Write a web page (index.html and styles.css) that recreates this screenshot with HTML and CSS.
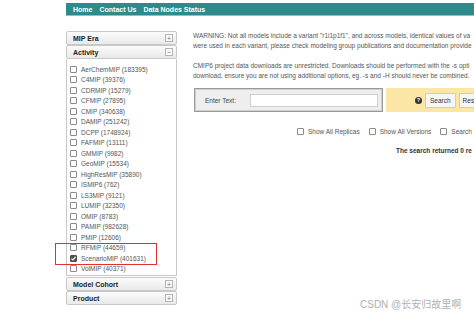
FILE: index.html
```html
<!DOCTYPE html>
<html lang="en">
<head>
<meta charset="utf-8">
<title>CMIP6 Search</title>
<link rel="stylesheet" href="styles.css">
</head>
<body>
<div class="page">
  <nav class="topnav">
    <a>Home</a>
    <a>Contact Us</a>
    <a>Data Nodes Status</a>
  </nav>
  <div class="layout">
    <aside class="sidebar">
      <div class="acc-head"><span>MIP Era</span><span class="acc-btn">+</span></div>
      <div class="acc-head"><span>Activity</span><span class="acc-btn">&minus;</span></div>
      <div class="acc-body">
        <div class="item"><span class="cb"></span>AerChemMIP (183395)</div>
        <div class="item"><span class="cb"></span>C4MIP (39376)</div>
        <div class="item"><span class="cb"></span>CDRMIP (15279)</div>
        <div class="item"><span class="cb"></span>CFMIP (27895)</div>
        <div class="item"><span class="cb"></span>CMIP (340638)</div>
        <div class="item"><span class="cb"></span>DAMIP (251242)</div>
        <div class="item"><span class="cb"></span>DCPP (1748924)</div>
        <div class="item"><span class="cb"></span>FAFMIP (13111)</div>
        <div class="item"><span class="cb"></span>GMMIP (9982)</div>
        <div class="item"><span class="cb"></span>GeoMIP (15534)</div>
        <div class="item"><span class="cb"></span>HighResMIP (35890)</div>
        <div class="item"><span class="cb"></span>ISMIP6 (762)</div>
        <div class="item"><span class="cb"></span>LS3MIP (9121)</div>
        <div class="item"><span class="cb"></span>LUMIP (32350)</div>
        <div class="item"><span class="cb"></span>OMIP (8783)</div>
        <div class="item"><span class="cb"></span>PAMIP (982628)</div>
        <div class="item"><span class="cb"></span>PMIP (12606)</div>
        <div class="item"><span class="cb"></span>RFMIP (44659)</div>
        <div class="item"><span class="cb checked"><svg viewBox="0 0 7 7" width="7" height="7"><path d="M1.4 3.6 L2.9 5 L5.6 1.8" fill="none" stroke="#fff" stroke-width="1.2"/></svg></span>ScenarioMIP (401631)</div>
        <div class="item"><span class="cb"></span>VolMIP (40371)</div>
      </div>
      <div class="acc-head gap"><span>Model Cohort</span><span class="acc-btn">+</span></div>
      <div class="acc-head"><span>Product</span><span class="acc-btn">+</span></div>
    </aside>
    <main class="content">
      <p class="notice">WARNING: Not all models include a variant "r1i1p1f1", and across models, identical values of va<br>were used in each variant, please check modeling group publications and documentation provide</p>
      <p class="notice second">CMIP6 project data downloads are unrestricted. Downloads should be performed with the -s opti<br>download, ensure you are not using additional options, eg. -s and -H should never be combined.</p>
      <div class="searchbar">
        <div class="search-text">
          <span class="label">Enter Text:</span>
          <span class="text-input"></span>
        </div>
        <div class="search-actions">
          <span class="help">?</span>
          <span class="btn">Search</span>
          <span class="btn btn-cut">Res</span>
        </div>
      </div>
      <div class="options">
        <span class="opt"><span class="cb"></span>Show All Replicas</span>
        <span class="opt"><span class="cb"></span>Show All Versions</span>
        <span class="opt"><span class="cb"></span>Search</span>
      </div>
      <div class="result">The search returned 0 re</div>
    </main>
  </div>
  <div class="highlight"></div>
  <div class="watermark">CSDN @长安归故里啊</div>
</div>
</body>
</html>
```

FILE: styles.css
```css
html, body {
  margin: 0;
  padding: 0;
  background: #fff;
}
body {
  width: 474px;
  height: 313px;
  overflow: hidden;
  font-family: "Liberation Sans", Arial, sans-serif;
}
.page {
  position: relative;
  width: 474px;
  height: 313px;
  padding: 3px 0 0 66px;
  box-sizing: border-box;
  overflow: hidden;
}
.topnav {
  height: 12px;
  background: #2f8a8c;
  border-bottom: 1px solid #8cc2c2;
  display: flex;
  align-items: center;
  gap: 7px;
  padding-left: 7px;
  font-size: 7px;
  font-weight: bold;
  color: #fff;
}
.topnav a { color: #fff; }
.layout {
  display: flex;
  margin-top: 15px;
  align-items: flex-start;
}
.sidebar {
  width: 111px;
  flex: none;
}
.acc-head {
  height: 14px;
  box-sizing: border-box;
  border: 1px solid #c8c8c8;
  border-radius: 2px;
  background: linear-gradient(#fbfbfb, #e9e9e9);
  display: flex;
  align-items: center;
  justify-content: space-between;
  padding: 0 3px 0 6px;
  font-size: 7px;
  font-weight: bold;
  color: #222;
}
.acc-head.gap { margin-top: 1px; }
.acc-btn {
  width: 8px;
  height: 8px;
  box-sizing: border-box;
  border: 1px solid #b5b5b5;
  background: #fafafa;
  display: flex;
  align-items: center;
  justify-content: center;
  font-size: 7px;
  font-weight: normal;
  line-height: 1;
  color: #777;
}
.acc-body {
  border: 1px solid #c8c8c8;
  border-top: none;
  padding: 5px 0 1px 3px;
  background: #fff;
}
.item {
  height: 10.5px;
  display: flex;
  align-items: center;
  gap: 4px;
  font-size: 6.5px;
  color: #555;
  white-space: nowrap;
}
.cb {
  width: 7px;
  height: 7px;
  box-sizing: border-box;
  border: 1px solid #8a8a8a;
  border-radius: 1px;
  background: #fff;
  flex: none;
  display: block;
  position: relative;
}
.cb.checked {
  background: #4f4f4f;
  border-color: #4f4f4f;
}
.cb.checked svg {
  position: absolute;
  left: -1px;
  top: -1px;
}
.content {
  margin-left: 16px;
  flex: 1;
  min-width: 0;
  white-space: nowrap;
}
.notice {
  margin: 0;
  font-size: 6.5px;
  line-height: 10px;
  color: #555;
}
.notice.second { margin-top: 10px; }
.searchbar {
  display: flex;
  gap: 3px;
  height: 24px;
  margin-top: 7px;
  margin-left: 1px;
}
.search-text {
  width: 189px;
  flex: none;
  box-sizing: border-box;
  border: 1px solid #9a9a9a;
  box-shadow: inset 0 0 0 1px #cfcfcf;
  background: #eeeeee;
  display: flex;
  align-items: center;
  padding-left: 10px;
}
.label {
  width: 45px;
  font-size: 6.5px;
  color: #444;
}
.text-input {
  width: 128px;
  height: 13px;
  box-sizing: border-box;
  border: 1px solid #cfcfcf;
  background: #fff;
}
.search-actions {
  flex: 1;
  background: #fbe6a5;
  display: flex;
  align-items: center;
  padding-left: 29px;
  gap: 3px;
  overflow: hidden;
}
.help {
  width: 7px;
  height: 7px;
  flex: none;
  border-radius: 50%;
  background: #333;
  color: #fff;
  font-size: 5.5px;
  font-weight: bold;
  display: flex;
  align-items: center;
  justify-content: center;
}
.btn {
  height: 15px;
  box-sizing: border-box;
  padding: 0 4px;
  border: 1px solid #cccccc;
  border-radius: 1px;
  background: #f6f6f6;
  font-size: 6.5px;
  color: #333;
  display: flex;
  align-items: center;
  flex: none;
}
.btn-cut {
  padding: 0 0 0 3px;
  border-right: none;
  flex: 1;
}
.options {
  display: flex;
  gap: 9px;
  margin-top: 14px;
  padding-left: 104px;
  height: 10px;
  align-items: center;
}
.opt {
  display: flex;
  align-items: center;
  gap: 4px;
  font-size: 6.5px;
  color: #555;
}
.result {
  margin-top: 10px;
  padding-left: 203px;
  font-size: 6.5px;
  line-height: 10px;
  font-weight: bold;
  color: #333;
}
.highlight {
  position: absolute;
  left: 55px;
  top: 243px;
  width: 102px;
  height: 22px;
  box-sizing: border-box;
  border: 1.5px solid #e0312f;
}
.watermark {
  position: absolute;
  left: 360px;
  top: 296px;
  font-size: 10px;
  color: #b0b0b0;
  font-family: "Liberation Sans", "Noto Sans CJK SC", sans-serif;
  white-space: nowrap;
}
```
